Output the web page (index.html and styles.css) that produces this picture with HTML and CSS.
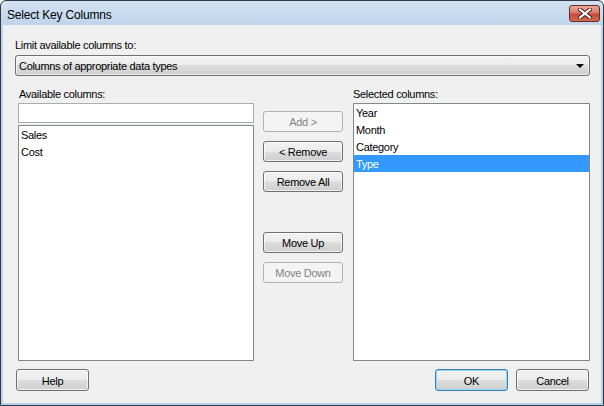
FILE: index.html
```html
<!DOCTYPE html>
<html lang="en">
<head>
    <meta charset="UTF-8">
    <title>Select Key Columns</title>
    <link rel="stylesheet" href="styles.css">
</head>
<body>
    <div class="window">
        <div class="titlebar">
            <span class="title">Select Key Columns</span>
            <div class="close-btn">
                <svg width="14" height="11" viewBox="0 0 14 11">
                    <path d="M2 1.5 L12 9.5 M12 1.5 L2 9.5" stroke="#4a1410" stroke-width="4" stroke-linecap="square"/>
                    <path d="M2 1.5 L12 9.5 M12 1.5 L2 9.5" stroke="#ffffff" stroke-width="2.2" stroke-linecap="square"/>
                </svg>
            </div>
        </div>

        <div class="client">
            <div class="label">Limit available columns to:</div>
            <div class="combo">
                <span>Columns of appropriate data types</span>
                <span class="arrow"></span>
            </div>

            <div class="main">
                <div class="panel">
                    <div class="label">Available columns:</div>
                    <input type="text" class="filter">
                    <div class="listbox left-list">
                        <div class="item">Sales</div>
                        <div class="item">Cost</div>
                    </div>
                </div>

                <div class="btn-col">
                    <button class="btn" disabled>Add &gt;</button>
                    <button class="btn">&lt; Remove</button>
                    <button class="btn">Remove All</button>
                    <button class="btn spaced">Move Up</button>
                    <button class="btn" disabled>Move Down</button>
                </div>

                <div class="panel right-panel">
                    <div class="label">Selected columns:</div>
                    <div class="listbox right-list">
                        <div class="item">Year</div>
                        <div class="item">Month</div>
                        <div class="item">Category</div>
                        <div class="item selected">Type</div>
                    </div>
                </div>
            </div>

            <div class="footer">
                <button class="btn small">Help</button>
                <div class="footer-right">
                    <button class="btn small default">OK</button>
                    <button class="btn small">Cancel</button>
                </div>
            </div>
        </div>
    </div>
</body>
</html>
```

FILE: styles.css
```css
* {
    box-sizing: border-box;
}
body {
    margin: 0;
    width: 604px;
    height: 406px;
    font-family: "Liberation Sans", Arial, sans-serif;
    font-size: 11px;
    letter-spacing: -0.3px;
    color: #000;
    background: #ffffff;
}
.window {
    width: 604px;
    height: 406px;
    border: 1px solid #2f3a45;
    border-radius: 6px 6px 0 0;
    background: linear-gradient(#d3e2f2, #b9d1ea 30px, #b9d1ea);
    padding: 0 2px 2px;
    display: flex;
    flex-direction: column;
}
.titlebar {
    height: 24px;
    display: flex;
    justify-content: space-between;
    align-items: flex-start;
    padding-left: 4px;
}
.title {
    font-size: 12px;
    letter-spacing: -0.2px;
    line-height: 14px;
    margin-top: 7px;
}
.close-btn {
    width: 31px;
    height: 17px;
    margin-top: 4px;
    margin-right: 1px;
    border: 1px solid #6b2a22;
    border-radius: 3px;
    background: linear-gradient(#e9a99c, #d47b6b 45%, #c44a36 55%, #d26a52);
    display: flex;
    align-items: center;
    justify-content: center;
}
.client {
    flex: 1;
    background: #f0f0f0;
    padding: 14px 11px 0 12px;
    display: flex;
    flex-direction: column;
}
.label {
    line-height: 13px;
    height: 13px;
}
.combo {
    margin-top: 3px;
    height: 21px;
    border: 1px solid #707070;
    border-radius: 3px;
    background: linear-gradient(#f2f2f2, #ebebeb 50%, #dddddd 50%, #cfcfcf);
    box-shadow: inset 0 0 0 1px rgba(255, 255, 255, 0.6);
    display: flex;
    align-items: center;
    justify-content: space-between;
    padding: 0 5px 0 3px;
}
.arrow {
    width: 0;
    height: 0;
    border-left: 4px solid transparent;
    border-right: 4px solid transparent;
    border-top: 4px solid #000;
    margin-top: 1px;
}
.main {
    display: flex;
    margin-top: 12px;
    margin-left: 3px;
}
.panel {
    width: 236px;
    display: flex;
    flex-direction: column;
}
.panel .label {
    padding-left: 1px;
}
.right-panel {
    width: 237px;
}
.right-panel .label {
    padding-left: 0;
}
.filter {
    margin-top: 2px;
    height: 20px;
    border: 1px solid #abadb3;
    background: #fff;
    padding: 0;
    font: inherit;
}
.listbox {
    background: #fff;
    border: 1px solid #828790;
}
.left-list {
    margin-top: 2px;
    height: 236px;
}
.right-list {
    margin-top: 2px;
    height: 258px;
}
.item {
    height: 17px;
    line-height: 18px;
    padding-left: 2px;
}
.item.selected {
    background: #3399ff;
    color: #fff;
}
.btn-col {
    width: 80px;
    margin: 0 10px 0 9px;
    padding-top: 23px;
    display: flex;
    flex-direction: column;
    gap: 9px;
}
.btn {
    height: 21px;
    width: 80px;
    border: 1px solid #707070;
    border-radius: 3px;
    background: linear-gradient(#f2f2f2, #ebebeb 50%, #dddddd 50%, #cfcfcf);
    box-shadow: inset 0 0 0 1px rgba(255, 255, 255, 0.7);
    font-family: "Liberation Sans", Arial, sans-serif;
    font-size: 11px;
    letter-spacing: -0.3px;
    color: #000;
    padding: 1px 0 0;
}
.btn:disabled {
    border-color: #adb2b5;
    background: #f4f4f4;
    color: #838383;
    box-shadow: none;
}
.btn.spaced {
    margin-top: 31px;
}
.footer {
    margin-top: 8px;
    display: flex;
    justify-content: space-between;
    padding-left: 1px;
    padding-right: 1px;
}
.footer-right {
    display: flex;
    gap: 8px;
}
.btn.small {
    width: 73px;
    height: 22px;
}
.btn.default {
    border-color: #3c7fb1;
    box-shadow: inset 0 0 0 1px #8fd6f8;
}
```
